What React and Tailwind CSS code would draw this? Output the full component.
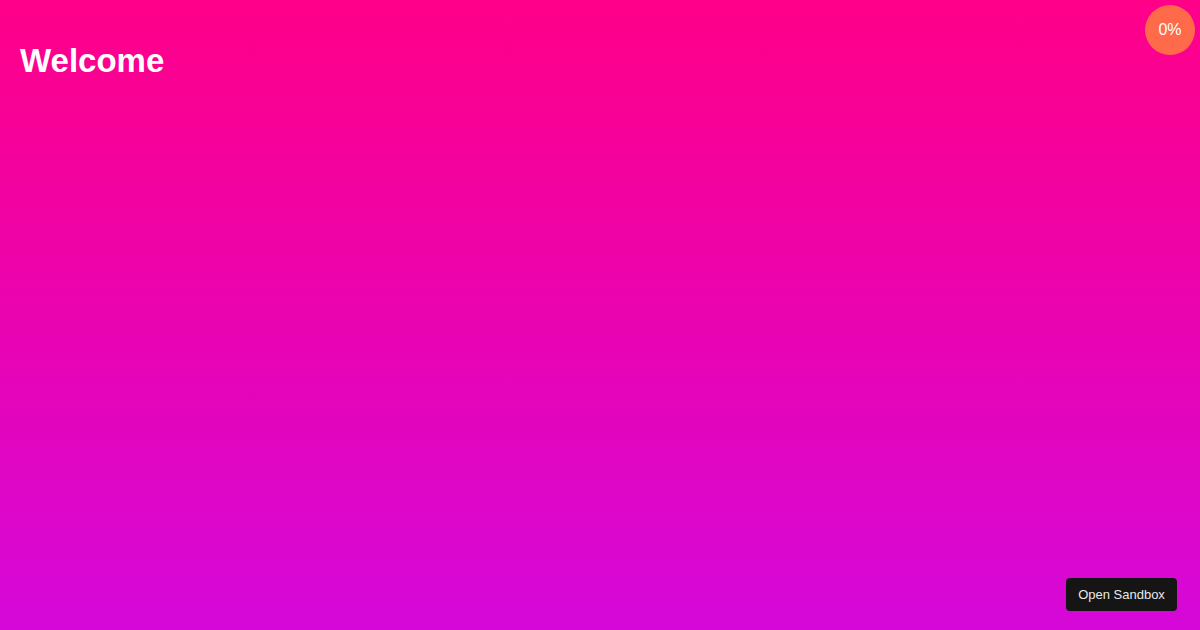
const App = () => {
  return (
    <div className="relative min-h-[630px] w-full bg-[linear-gradient(to_bottom,#ff0088,#d508d9)] font-['Liberation_Sans',Arial,sans-serif]">
      <h1 className="pl-[20px] pt-[44px] text-[33px] font-bold leading-none text-white">
        Welcome
      </h1>

      {/* progress badge */}
      <div className="absolute right-[5px] top-[5px] flex h-[50px] w-[50px] items-center justify-center rounded-full bg-[#ff6a4a] text-[16px] text-white">
        0%
      </div>

      <button className="absolute bottom-[19px] right-[23px] h-[33px] w-[111px] rounded-[4px] bg-[#151515] text-[13px] text-[#e8e8e8]">
        Open Sandbox
      </button>
    </div>
  );
};

export default App;
